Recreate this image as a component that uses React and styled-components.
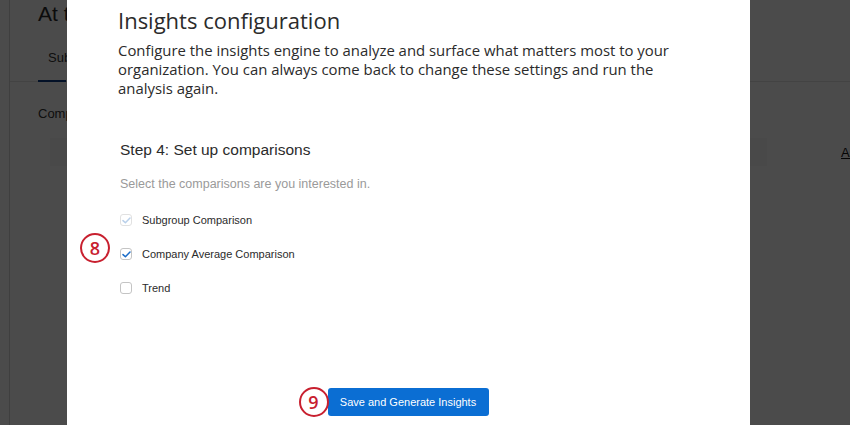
import React from "react";
import styled, { createGlobalStyle } from "styled-components";

const GlobalStyle = createGlobalStyle`
  html, body {
    margin: 0;
    padding: 0;
    width: 100%;
    height: 100%;
    overflow: hidden;
    font-family: "Liberation Sans", Arial, sans-serif;
  }
  #root {
    height: 100%;
  }
`;

const options = [
  { label: "Subgroup Comparison", checked: true, disabled: true },
  { label: "Company Average Comparison", checked: true, badge: "8" },
  { label: "Trend", checked: false }
];

const App = () => (
  <>
    <GlobalStyle />
    <Page>
      <Sidebar />
      <Main>
        <PageTitle>At the moment</PageTitle>
        <Tabs>
          <Tab active>Subgroups</Tab>
        </Tabs>
        <SectionLabel>Comparisons</SectionLabel>
        <CardRow>
          <Card />
          <CardLink>Add</CardLink>
        </CardRow>
      </Main>
      <Overlay />
      <Modal>
        <Title>Insights configuration</Title>
        <Intro>
          Configure the insights engine to analyze and surface what matters most to your
          organization. You can always come back to change these settings and run the
          analysis again.
        </Intro>
        <Step>
          <StepTitle>Step 4: Set up comparisons</StepTitle>
          <StepHint>Select the comparisons are you interested in.</StepHint>
          <OptionList>
            {options.map((o) => (
              <Option key={o.label}>
                {o.badge && <Badge left="-40px" top="-12px">{o.badge}</Badge>}
                <Box checked={o.checked} disabled={o.disabled}>
                  {o.checked && (
                    <svg width="9" height="7" viewBox="0 0 9 7">
                      <path
                        d="M1 3.6 L3.4 5.8 L8 1"
                        fill="none"
                        stroke={o.disabled ? "#b9d0ea" : "#1b6cc8"}
                        strokeWidth="1.5"
                        strokeLinecap="round"
                        strokeLinejoin="round"
                      />
                    </svg>
                  )}
                </Box>
                <OptionLabel>{o.label}</OptionLabel>
              </Option>
            ))}
          </OptionList>
        </Step>
        <Footer>
          <ButtonWrap>
            <Badge left="-29px" top="-1px">9</Badge>
            <PrimaryButton>Save and Generate Insights</PrimaryButton>
          </ButtonWrap>
        </Footer>
      </Modal>
    </Page>
  </>
);

const Page = styled.div`
  position: relative;
  display: flex;
  width: 850px;
  height: 425px;
  background: #ffffff;
  overflow: hidden;
`;

const Sidebar = styled.div`
  width: 9px;
  flex-shrink: 0;
  border-right: 1px solid #d6d6d6;
`;

const Main = styled.div`
  flex: 1;
  display: flex;
  flex-direction: column;
  padding: 0 0 0 28px;
`;

const PageTitle = styled.div`
  font-size: 21px;
  color: #2a2a2a;
  line-height: 28px;
`;

const Tabs = styled.div`
  display: flex;
  margin-top: 22px;
  margin-left: -28px;
  padding-left: 28px;
  border-bottom: 1px solid #e4e4e4;
`;

const Tab = styled.div`
  font-size: 13px;
  color: #333;
  padding: 0 0 15px 10px;
  width: 18px;
  border-bottom: 2px solid ${(p) => (p.active ? "#0b3a84" : "transparent")};
  margin-bottom: -1px;
`;

const SectionLabel = styled.div`
  font-size: 13px;
  color: #333;
  margin-top: 24px;
`;

const CardRow = styled.div`
  display: flex;
  align-items: center;
  margin-top: 17px;
  margin-left: 12px;
`;

const Card = styled.div`
  width: 717px;
  height: 28px;
  flex-shrink: 0;
  background: #f7f7f7;
`;

const CardLink = styled.span`
  margin-left: 74px;
  font-size: 13px;
  color: #111;
  text-decoration: underline;
  white-space: nowrap;
`;

const Overlay = styled.div`
  position: absolute;
  inset: 0;
  background: rgba(0, 0, 0, 0.705);
`;

const Modal = styled.div`
  position: absolute;
  top: 0;
  bottom: 0;
  left: 67px;
  width: 683px;
  background: #ffffff;
  box-sizing: border-box;
  padding: 6px 51px 0;
  display: flex;
  flex-direction: column;
`;

const Title = styled.h1`
  margin: 0;
  font-family: "Open Sans", "Liberation Sans", sans-serif;
  font-weight: 400;
  font-size: 22px;
  line-height: 28px;
  color: #2b2b2b;
`;

const Intro = styled.p`
  margin: 7px 0 0;
  font-family: "Open Sans", "Liberation Sans", sans-serif;
  font-size: 14.9px;
  line-height: 19px;
  color: #2b2b2b;
`;

const Step = styled.div`
  margin-top: 41px;
  padding-left: 2px;
  display: flex;
  flex-direction: column;
`;

const StepTitle = styled.h2`
  margin: 0;
  font-weight: 400;
  font-size: 15.5px;
  line-height: 22px;
  color: #2b2b2b;
`;

const StepHint = styled.div`
  margin-top: 14px;
  font-size: 12.5px;
  line-height: 18px;
  color: #9a9a9a;
`;

const OptionList = styled.div`
  display: flex;
  flex-direction: column;
  gap: 16px;
  margin-top: 18px;
`;

const Option = styled.label`
  position: relative;
  display: flex;
  align-items: center;
  gap: 10px;
  height: 18px;
`;

const Box = styled.span`
  width: 12px;
  height: 12px;
  box-sizing: border-box;
  border: 1px solid ${(p) => (p.disabled ? "#e1e1e1" : "#c4c4c4")};
  border-radius: 3px;
  display: flex;
  align-items: center;
  justify-content: center;
  background: #fff;
`;

const OptionLabel = styled.span`
  font-size: 11px;
  color: #2b2b2b;
`;

const Badge = styled.span`
  position: absolute;
  left: ${(p) => p.left};
  top: ${(p) => p.top};
  width: 30px;
  height: 30px;
  box-sizing: border-box;
  border: 2.5px solid #c8202f;
  border-radius: 50%;
  background: #fff;
  display: flex;
  align-items: center;
  justify-content: center;
  color: #c8202f;
  font-family: "Open Sans", "Liberation Sans", sans-serif;
  font-size: 18px;
  font-weight: 600;
  line-height: 1;
`;

const Footer = styled.div`
  margin-top: auto;
  margin-bottom: 9px;
  display: flex;
  justify-content: center;
`;

const ButtonWrap = styled.div`
  position: relative;
  margin-left: -1px;
`;

const PrimaryButton = styled.button`
  height: 28px;
  width: 161px;
  border: none;
  border-radius: 3px;
  background: #0b6ed3;
  color: #fff;
  font-family: "Liberation Sans", Arial, sans-serif;
  font-size: 11px;
  padding: 0;
`;

export default App;
